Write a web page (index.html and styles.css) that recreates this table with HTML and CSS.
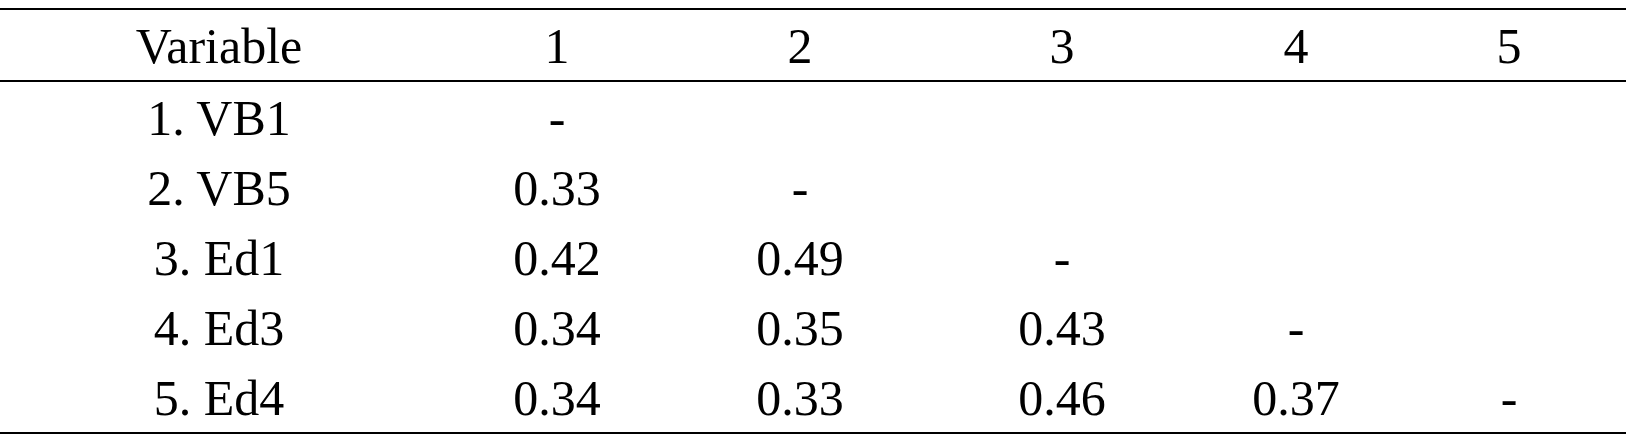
FILE: index.html
```html
<!DOCTYPE html>
<html lang="en">
<head>
    <meta charset="UTF-8">
    <meta name="viewport" content="width=device-width, initial-scale=1.0">
    <title>Correlations</title>
    <link rel="stylesheet" href="styles.css">
</head>
<body>

<div class="table-wrap">
    <table class="corr-table">
        <colgroup>
            <col class="col-var">
            <col class="col-1">
            <col class="col-2">
            <col class="col-3">
            <col class="col-4">
            <col class="col-5">
        </colgroup>
        <thead>
            <tr>
                <th>Variable</th>
                <th>1</th>
                <th>2</th>
                <th>3</th>
                <th>4</th>
                <th>5</th>
            </tr>
        </thead>
        <tbody>
            <tr>
                <td>1. VB1</td>
                <td>-</td>
                <td></td>
                <td></td>
                <td></td>
                <td></td>
            </tr>
            <tr>
                <td>2. VB5</td>
                <td>0.33</td>
                <td>-</td>
                <td></td>
                <td></td>
                <td></td>
            </tr>
            <tr>
                <td>3. Ed1</td>
                <td>0.42</td>
                <td>0.49</td>
                <td>-</td>
                <td></td>
                <td></td>
            </tr>
            <tr>
                <td>4. Ed3</td>
                <td>0.34</td>
                <td>0.35</td>
                <td>0.43</td>
                <td>-</td>
                <td></td>
            </tr>
            <tr>
                <td>5. Ed4</td>
                <td>0.34</td>
                <td>0.33</td>
                <td>0.46</td>
                <td>0.37</td>
                <td>-</td>
            </tr>
        </tbody>
    </table>
</div>

</body>
</html>
```

FILE: styles.css
```css
/* Global Styles */
body {
    font-family: "Liberation Serif", "Times New Roman", serif;
    background-color: #ffffff;
    color: #000;
    margin: 0;
    padding: 8px 0 0 0;
}

/* Table */
.table-wrap {
    width: 1626px;
}

.corr-table {
    width: 1626px;
    border-collapse: collapse;
    table-layout: fixed;
    font-size: 50px;
    border-top: 2px solid #000;
    border-bottom: 2px solid #000;
}

.col-var { width: 438px; }
.col-1 { width: 238px; }
.col-2 { width: 248px; }
.col-3 { width: 276px; }
.col-4 { width: 192px; }
.col-5 { width: 234px; }

.corr-table thead tr {
    border-bottom: 2px solid #000;
}

.corr-table th,
.corr-table td {
    font-weight: normal;
    text-align: center;
    height: 70px;
    line-height: 68px;
    padding: 2px 0 0 0;
    box-sizing: border-box;
    white-space: nowrap;
}
```
